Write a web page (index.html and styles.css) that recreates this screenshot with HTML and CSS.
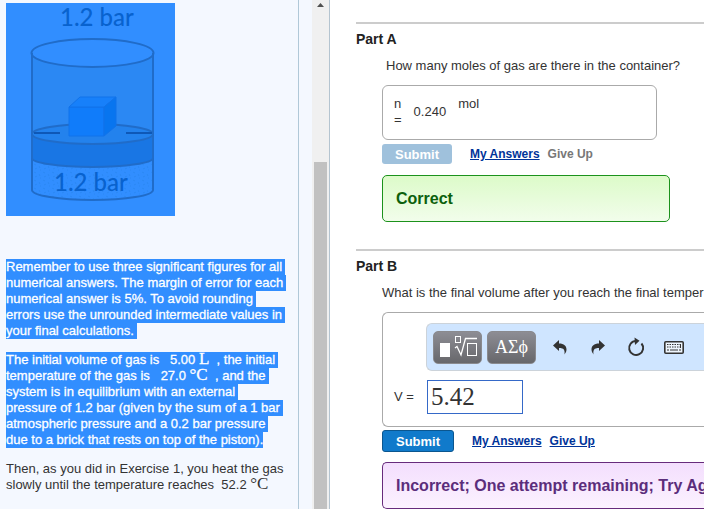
FILE: index.html
```html
<!DOCTYPE html>
<html lang="en">
<head>
<meta charset="utf-8">
<title>Gas in a container</title>
<link rel="stylesheet" href="styles.css">
</head>
<body>
<div class="app">
  <aside class="problem">
    <div class="problem-text">
      <svg class="figure" viewBox="0 0 169 213" role="img" aria-label="Cylinder with a piston and a brick">
        <defs>
          <pattern id="grain" width="9" height="8" patternUnits="userSpaceOnUse">
            <path d="M1 1l2 1M6 3l1 2M2 6l2-1M7 7h1" stroke="#2583ec" stroke-width="1" opacity=".6"/>
          </pattern>
        </defs>
        <rect width="169" height="213" fill="#318eff"/>
        <path d="M26 50V130H147V50A60.500 14 0 0 1 26 50Z" fill="#2b88f3"/>
        <path d="M26 155A60.500 9 0 0 0 147 155V187A60.500 10 0 0 1 26 187Z" fill="url(#grain)"/>
        <path d="M26 130A60.500 10 0 0 0 147 130V155A60.500 9 0 0 1 26 155Z" fill="#1976e4"/>
        <ellipse cx="86.500" cy="131" rx="60.500" ry="10" fill="#2382ed"/>
        <g fill="none" stroke="#206cc9" stroke-width="2">
          <ellipse cx="86.500" cy="50" rx="61" ry="14"/>
          <path d="M26 50V187A60.500 10 0 0 0 147 187V50"/>
          <ellipse cx="86.500" cy="131" rx="60.500" ry="10"/>
          <path d="M26 155A60.500 9 0 0 0 147 155"/>
        </g>
        <path d="M28 130H54M120 130H146" stroke="#0e58b7" stroke-width="2"/>
        <g stroke="#1173ea" stroke-width="1">
          <path d="M63 104H98V133H63Z" fill="#107cfa"/>
          <path d="M63 104L74 94H110L98 104Z" fill="#1780fa"/>
          <path d="M98 104L110 94V123L98 133Z" fill="#0875ef"/>
        </g>
        <g class="figure-label">
          <text x="54" y="23">1.2 bar</text>
          <text x="48" y="188">1.2 bar</text>
        </g>
      </svg>
      <p><span class="selected trail">Remember to use three significant figures for all numerical answers. The margin of error for each numerical answer is 5%. To avoid rounding<br>errors use the unrounded intermediate values in your final calculations.</span></p>
      <p><span class="selected trail">The initial volume of gas is &nbsp; 5.00 <span class="unit">L</span> &nbsp;, the initial<br>temperature of the gas is &nbsp; 27.0 <span class="unit">°C</span> &nbsp;, and the<br>system is in equilibrium with an external<br>pressure of 1.2 bar (given by the sum of a 1 bar<br>atmospheric pressure and a 0.2 bar pressure<br></span><span class="selected">due to a brick that rests on top of the piston).</span></p>
      <p>Then, as you did in Exercise 1, you heat the gas slowly until the temperature reaches &nbsp;52.2 <span class="unit">°C</span></p>
    </div>
    <div class="scrollbar">
      <svg class="scroll-up" viewBox="0 0 7 4" aria-hidden="true"><path d="M0 4L3.500 0L7 4Z" fill="#505050"/></svg>
      <div class="thumb"></div>
    </div>
  </aside>

  <main class="parts">
    <section class="part">
      <h2>Part A</h2>
      <p class="question indent">How many moles of gas are there in the container?</p>
      <div class="answer answer-a">
        <span class="variable">n<br>=</span>
        <span class="value">0.240</span>
        <span>mol</span>
      </div>
      <div class="actions">
        <button class="submit" type="button" disabled>Submit</button>
        <a href="#answers-a">My Answers</a>
        <span class="inactive">Give Up</span>
      </div>
      <div class="feedback correct">Correct</div>
    </section>

    <section class="part">
      <h2>Part B</h2>
      <p class="question">What is the final volume after you reach the final temper</p>
      <div class="answer answer-b">
        <div class="toolbar">
          <button class="tool" type="button" aria-label="Templates">
            <svg width="40" height="26" viewBox="0 0 40 26" fill="none" stroke="#fff">
              <rect x="2" y="9" width="10" height="14" fill="#fff" stroke="none"/>
              <path d="M17 14L19 12.500L23 21L27.500 4.500H39" stroke-width="1.300"/>
              <rect x="17.500" y="2.500" width="5" height="6"/>
              <rect x="29.500" y="9.500" width="9" height="12"/>
            </svg>
          </button>
          <button class="tool symbols" type="button">ΑΣϕ</button>
          <div class="icons">
            <button class="icon" type="button" aria-label="Undo">
              <svg width="14" height="16" viewBox="0 0 14 16"><path d="M0 6.500L6 1V4.500C11 4.500 13.500 7 13.500 10.500C13.500 12.500 12.500 14 11.500 15.500C12 11 11 9 6 9V12Z" fill="#333"/></svg>
            </button>
            <button class="icon" type="button" aria-label="Redo">
              <svg width="14" height="16" viewBox="0 0 14 16"><path d="M14 6.500L8 1V4.500C3 4.500 .5 7 .5 10.500C.5 12.500 1.500 14 2.500 15.500C2 11 3 9 8 9V12Z" fill="#333"/></svg>
            </button>
            <button class="icon" type="button" aria-label="Reset">
              <svg width="18" height="20" viewBox="0 0 18 20"><path d="M9 4A7 7 0 1 0 14.500 6.500" fill="none" stroke="#333" stroke-width="2"/><path d="M7.500 .5L12.500 3.800L8 8Z" fill="#333"/></svg>
            </button>
            <button class="icon" type="button" aria-label="Keyboard">
              <svg width="20" height="13" viewBox="0 0 20 13"><rect x=".8" y=".8" width="18.400" height="11.400" rx="1" fill="#eef5fd" stroke="#333" stroke-width="1.600"/><path d="M3 3.500H17M3 6H17" stroke="#333" stroke-dasharray="1.500 1"/><path d="M3 9H5M6 9H14M15 9H17M16.500 3V7" stroke="#333"/></svg>
            </button>
          </div>
        </div>
        <div class="entry">
          <label for="volume">V =</label>
          <input id="volume" type="text" value="5.42">
        </div>
      </div>
      <div class="actions">
        <button class="submit" type="button">Submit</button>
        <a href="#answers-b">My Answers</a>
        <a href="#give-up-b">Give Up</a>
      </div>
      <div class="feedback incorrect">Incorrect; One attempt remaining; Try Aga</div>
    </section>
  </main>
</div>
</body>
</html>
```
FILE: styles.css
```css
* { box-sizing: border-box; }

body {
  margin: 0;
  background: #fff;
  color: #333;
  font: 13px/16px "Liberation Sans", Arial, sans-serif;
}

.app {
  display: grid;
  grid-template-columns: 330px minmax(0, 1fr);
  height: 100vh;
  overflow: hidden;
}

.problem {
  display: flex;
  justify-content: space-between;
  overflow: hidden;
  background: #f4f8ff;
  border-right: 1px solid #b4c4d0;
}

.problem-text {
  width: 299px;
  padding: 3px 8px 0 6px;
  border-right: 1px solid #b0c8d8;
}

.problem-text p { margin: 0 0 13px; }

.figure {
  display: block;
  width: 169px;
  margin-bottom: 43px;
}

.figure-label {
  fill: #0862ce;
  font: 500 24px Lato, "Noto Sans", sans-serif;
}

.selected {
  padding-bottom: 1px;
  background: #318eff;
  color: #fff;
  -webkit-text-stroke: 0.3px #fff;
}

.trail {
  padding-right: 3px;
  -webkit-box-decoration-break: clone;
  box-decoration-break: clone;
}

.unit {
  font: 17px/1px "Liberation Serif", serif;
}

.scrollbar {
  display: flex;
  flex-direction: column;
  align-items: center;
  width: 17px;
  padding: 3px 2px 0;
  background: #f0f0f0;
}

.scroll-up { width: 7px; height: 4px; }

.thumb {
  flex: 1;
  width: 13px;
  margin-top: 155px;
  background: #c1c1c1;
}

.parts {
  padding: 22px 0 0 26px;
  overflow: hidden;
}

.part {
  padding-left: 26px;
  border-top: 2px solid #ccc;
}

.part + .part { margin-top: 27px; }

h2 {
  margin: 7px 0 11px -26px;
  color: #222;
  font-size: 14px;
  line-height: 16px;
}

.question {
  margin: 0 0 11px;
  white-space: nowrap;
}

.indent { padding-left: 4px; }

.answer {
  border: 1px solid #aaa;
  border-radius: 6px;
}

.answer-a {
  display: flex;
  gap: 12px;
  max-width: 275px;
  height: 55px;
  padding: 10px 11px;
}

.value { padding-top: 8px; }

.actions {
  display: flex;
  align-items: center;
  height: 28px;
  font-size: 12px;
  font-weight: bold;
}

.submit {
  width: 72px;
  height: 22px;
  margin-right: 18px;
  padding: 0;
  border: 1px solid #0b568f;
  border-radius: 3px;
  background: #107acb;
  color: #fff;
  font: bold 13px "Liberation Sans", Arial, sans-serif;
}

.submit:disabled {
  width: 70px;
  height: 20px;
  border: 0;
  background: #9fc1dc;
}

.actions a {
  margin-right: 8px;
  color: #039;
}

.inactive { color: #777; }

.feedback {
  height: 47px;
  padding: 0 13px;
  border: 1px solid;
  border-radius: 5px;
  font-size: 16px;
  font-weight: bold;
  line-height: 45px;
  white-space: nowrap;
}

.correct {
  max-width: 288px;
  margin-top: 7px;
  border-color: #1c921c;
  background: linear-gradient(#dcfbc9, #f2fdeb);
  color: #0c600c;
}

.incorrect {
  margin-top: 7px;
  border-color: #672b7c;
  border-right: 0;
  border-radius: 5px 0 0 5px;
  background: linear-gradient(#f3defd, #fcf2ff);
  color: #5b2d7b;
}

.answer-b {
  padding: 10px 0 12px 11px;
  border-right: 0;
  border-radius: 6px 0 0 6px;
}

.toolbar {
  display: flex;
  align-items: center;
  gap: 5px;
  height: 48px;
  margin-left: 32px;
  padding: 0 6px;
  border: 1px solid #ccd3da;
  border-right: 0;
  border-radius: 6px 0 0 6px;
  background: #cfe5ff;
}

.tool {
  display: flex;
  align-items: center;
  justify-content: center;
  width: 49px;
  height: 33px;
  padding: 0;
  border: 1px solid #8a8a8e;
  border-radius: 5px;
  background: linear-gradient(#8d8d94, #67676b);
  color: #fff;
}

.symbols { font: 18px "Liberation Serif", serif; }

.icons {
  display: flex;
  align-items: center;
}

.icon {
  display: flex;
  justify-content: center;
  width: 38px;
  padding: 0;
  border: 0;
  background: none;
}

.entry {
  display: flex;
  align-items: center;
  gap: 13px;
  margin-top: 9px;
}

.entry input {
  width: 96px;
  height: 34px;
  padding: 0 3px;
  border: 1px solid #3569c8;
  color: #333;
  font: 25px "Liberation Serif", serif;
}
```
